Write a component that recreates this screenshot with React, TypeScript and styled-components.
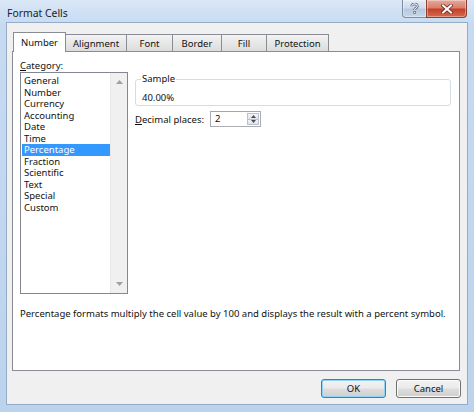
import React from "react";
import styled, { createGlobalStyle } from "styled-components";

const Global = createGlobalStyle`
  html, body { margin: 0; padding: 0; background: #c4d8f0; }
  * { box-sizing: border-box; }
`;

const FONT = `"Noto Sans", "DejaVu Sans", sans-serif`;

const Window = styled.div`
  width: 474px;
  height: 412px;
  display: flex;
  flex-direction: column;
  padding: 0 6px 7px 6px;
  background: linear-gradient(#dae7f6 0px, #c6dbf2 24px, #bcd3ee 100%);
  font-family: ${FONT};
  font-size: 9.5px;
  color: #111;
`;

const TitleBar = styled.div`
  height: 22px;
  display: flex;
  align-items: flex-start;
  flex: none;
`;

const TitleText = styled.div`
  margin: 6px 0 0 1px;
  font-size: 10.4px;
  line-height: 14px;
  color: #1b1b1b;
`;

const Caption = styled.div`
  margin-left: auto;
  margin-right: 1px;
  display: flex;
  height: 18px;
`;

const CapButton = styled.div<{ $close?: boolean }>`
  width: ${(p) => (p.$close ? 41 : 25)}px;
  height: 18px;
  display: flex;
  align-items: center;
  justify-content: center;
  border: 1px solid ${(p) => (p.$close ? "#8a3f32" : "#7d8ea3")};
  border-top: none;
  margin-left: ${(p) => (p.$close ? "-1px" : "0")};
  border-radius: ${(p) => (p.$close ? "0 0 4px 0" : "0 0 0 4px")};
  background: ${(p) =>
    p.$close
      ? "linear-gradient(#e6a99c 0%, #d9806d 45%, #c4412a 55%, #d66a4f 100%)"
      : "linear-gradient(#e3ebf5 0%, #cfdcec 45%, #b7c9df 55%, #c9d8ea 100%)"};
  box-shadow: inset 0 0 0 1px rgba(255, 255, 255, 0.35);
`;

const Client = styled.div`
  flex: 1;
  display: flex;
  flex-direction: column;
  background: #f0f0f0;
  border: 1px solid #95abc6;
  padding: 9px 7px 0 5px;
`;

const TabStrip = styled.div`
  display: flex;
  align-items: flex-end;
  height: 20px;
  margin: 0 0 -1px 1px;
  position: relative;
  z-index: 1;
`;

const Tab = styled.div<{ $w: number; $active?: boolean }>`
  width: ${(p) => p.$w}px;
  height: ${(p) => (p.$active ? 20 : 18)}px;
  margin-left: -1px;
  border: 1px solid #898c95;
  border-bottom: ${(p) => (p.$active ? "none" : "1px solid #898c95")};
  background: ${(p) =>
    p.$active ? "#ffffff" : "linear-gradient(#f3f3f3, #e6e6e6 55%, #dcdcdc)"};
  display: flex;
  align-items: center;
  justify-content: center;
  padding-top: ${(p) => (p.$active ? 0 : 1)}px;
  line-height: 12px;
  &:first-child { margin-left: 0; }
`;

const Panel = styled.div`
  height: 320px;
  background: #ffffff;
  border: 1px solid #898c95;
  padding: 7px 7px 0 7px;
  display: flex;
  flex-direction: column;
`;

const TopRow = styled.div`
  display: flex;
  gap: 7px;
`;

const LeftCol = styled.div`
  width: 108px;
  display: flex;
  flex-direction: column;
`;

const Label = styled.div`
  line-height: 13px;
  height: 13px;
  white-space: nowrap;
  u { text-decoration: underline; text-underline-offset: 1px; }
`;

const ListBox = styled.div`
  height: 222px;
  border: 1px solid #828790;
  display: flex;
  background: #fff;
`;

const Items = styled.div`
  flex: 1;
  padding: 2px 0 0 1px;
`;

const Item = styled.div<{ $sel?: boolean }>`
  height: 11.5px;
  line-height: 11.5px;
  padding-left: 2px;
  white-space: nowrap;
  background: ${(p) => (p.$sel ? "#3399ff" : "transparent")};
  color: ${(p) => (p.$sel ? "#ffffff" : "#111")};
`;

const ScrollBar = styled.div`
  width: 17px;
  background: #f0f0f0;
  border-left: 1px solid #e8e8e8;
  display: flex;
  flex-direction: column;
  justify-content: space-between;
  align-items: center;
  padding: 7px 0 7px;
`;

const RightCol = styled.div`
  flex: 1;
  margin-top: 14px;
  display: flex;
  flex-direction: column;
`;

const Group = styled.fieldset`
  margin: 0 1px 0 0;
  padding: 0 6px 1px 6px;
  border: 1px solid #d5dde3;
  border-radius: 3px;
  min-width: 0;
`;

const Legend = styled.legend`
  padding: 0 1px;
  margin-left: -1px;
  line-height: 12px;
  font-size: 9.5px;
`;

const SampleValue = styled.div`
  padding-top: 6px;
  line-height: 13px;
`;

const DecimalRow = styled.div`
  margin-top: 5px;
  display: flex;
  align-items: center;
  gap: 6px;
`;

const SpinBox = styled.div`
  width: 51px;
  height: 16px;
  border: 1px solid #abadb3;
  border-top-color: #a3a6ad;
  display: flex;
  background: #fff;
`;

const SpinValue = styled.div`
  flex: 1;
  padding-left: 4px;
  line-height: 14px;
`;

const SpinButtons = styled.div`
  width: 13px;
  display: flex;
  flex-direction: column;
  padding: 1px 1px 1px 0;
`;

const SpinBtn = styled.div`
  flex: 1;
  border: 1px solid #b8c3cf;
  background: linear-gradient(#f4f6f8, #dde3ea);
  display: flex;
  align-items: center;
  justify-content: center;
  &:first-child { border-bottom: none; }
`;

const Description = styled.div`
  margin-top: 13px;
  line-height: 13px;
  white-space: nowrap;
`;

const ButtonRow = styled.div`
  display: flex;
  justify-content: flex-end;
  gap: 10px;
  margin: 8px -1px 0 0;
`;

const Button = styled.div<{ $default?: boolean }>`
  width: 65px;
  height: 19px;
  border-radius: 3px;
  border: 1px solid ${(p) => (p.$default ? "#3c7fb1" : "#707070")};
  box-shadow: ${(p) =>
    p.$default ? "inset 0 0 0 1px #8fd3f5" : "inset 0 0 0 1px #fbfbfb"};
  background: linear-gradient(#f2f2f2 0%, #ebebeb 48%, #dddddd 52%, #cfcfcf 100%);
  display: flex;
  align-items: center;
  justify-content: center;
  line-height: 12px;
`;

const Tri = ({ up, color = "#606060" }: { up?: boolean; color?: string }) => (
  <svg width="7" height="4" viewBox="0 0 7 4">
    {up ? (
      <polygon points="0,4 3.5,0 7,4" fill={color} />
    ) : (
      <polygon points="0,0 3.5,4 7,0" fill={color} />
    )}
  </svg>
);

const SmallTri = ({ up }: { up?: boolean }) => (
  <svg width="5" height="3" viewBox="0 0 5 3">
    {up ? (
      <polygon points="0,3 2.5,0 5,3" fill="#4a4f57" />
    ) : (
      <polygon points="0,0 2.5,3 5,0" fill="#4a4f57" />
    )}
  </svg>
);

const categories = [
  "General",
  "Number",
  "Currency",
  "Accounting",
  "Date",
  "Time",
  "Percentage",
  "Fraction",
  "Scientific",
  "Text",
  "Special",
  "Custom",
];

const tabs: { name: string; w: number }[] = [
  { name: "Number", w: 53 },
  { name: "Alignment", w: 62 },
  { name: "Font", w: 47 },
  { name: "Border", w: 50 },
  { name: "Fill", w: 46 },
  { name: "Protection", w: 63 },
];

const QPath =
  "M1.7 3.2 C1.7 1.6 3 0.9 4.5 0.9 C6.1 0.9 7.3 1.8 7.3 3.2 C7.3 4.5 6.2 4.9 5.3 5.5 C4.8 5.9 4.6 6.3 4.6 7.1";

export default function App() {
  return (
    <>
      <Global />
      <Window>
        <TitleBar>
          <TitleText>Format Cells</TitleText>
          <Caption>
            <CapButton>
              <svg width="9" height="11" viewBox="0 0 9 11">
                <path d={QPath} fill="none" stroke="#4b5a6c" strokeWidth="2.6" />
                <path d={QPath} fill="none" stroke="#e9eef4" strokeWidth="1.1" />
                <rect x="3.4" y="8.2" width="2.4" height="2.4" fill="#4b5a6c" />
                <rect x="4" y="8.8" width="1.2" height="1.2" fill="#e9eef4" />
              </svg>
            </CapButton>
            <CapButton $close>
              <svg width="12" height="10" viewBox="0 0 12 10">
                <path
                  d="M2 1.5 L10 8.5 M10 1.5 L2 8.5"
                  stroke="#6b2a20"
                  strokeWidth="3.6"
                  strokeLinecap="square"
                />
                <path
                  d="M2 1.5 L10 8.5 M10 1.5 L2 8.5"
                  stroke="#ffffff"
                  strokeWidth="2"
                  strokeLinecap="square"
                />
              </svg>
            </CapButton>
          </Caption>
        </TitleBar>
        <Client>
          <TabStrip>
            {tabs.map((t, i) => (
              <Tab key={t.name} $w={t.w} $active={i === 0}>
                {t.name}
              </Tab>
            ))}
          </TabStrip>
          <Panel>
            <TopRow>
              <LeftCol>
                <Label>
                  <u>C</u>ategory:
                </Label>
                <ListBox>
                  <Items>
                    {categories.map((c) => (
                      <Item key={c} $sel={c === "Percentage"}>
                        {c}
                      </Item>
                    ))}
                  </Items>
                  <ScrollBar>
                    <Tri up color="#a0a0a0" />
                    <Tri color="#a0a0a0" />
                  </ScrollBar>
                </ListBox>
              </LeftCol>
              <RightCol>
                <Group>
                  <Legend>Sample</Legend>
                  <SampleValue>40.00%</SampleValue>
                </Group>
                <DecimalRow>
                  <Label>
                    <u>D</u>ecimal places:
                  </Label>
                  <SpinBox>
                    <SpinValue>2</SpinValue>
                    <SpinButtons>
                      <SpinBtn>
                        <SmallTri up />
                      </SpinBtn>
                      <SpinBtn>
                        <SmallTri />
                      </SpinBtn>
                    </SpinButtons>
                  </SpinBox>
                </DecimalRow>
              </RightCol>
            </TopRow>
            <Description>
              Percentage formats multiply the cell value by 100 and displays the result with a
              percent symbol.
            </Description>
          </Panel>
          <ButtonRow>
            <Button $default>OK</Button>
            <Button>Cancel</Button>
          </ButtonRow>
        </Client>
      </Window>
    </>
  );
}
